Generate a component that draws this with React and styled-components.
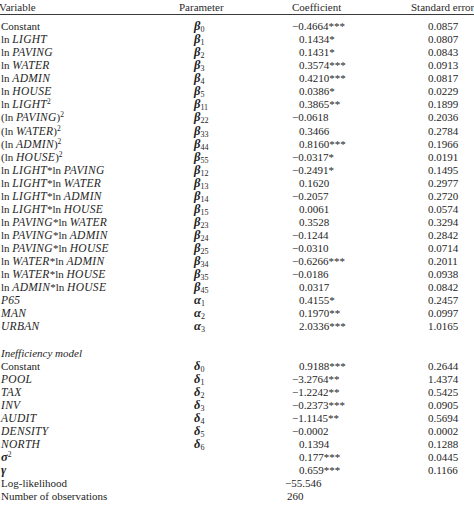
import React from 'react';
import styled, { createGlobalStyle } from 'styled-components';

const GlobalStyle = createGlobalStyle`
  html, body {
    margin: 0;
    padding: 0;
    background: #ffffff;
  }
  body {
    font-family: "Liberation Serif", "Times New Roman", serif;
    font-size: 11px;
    color: #1e1e1e;
  }
`;

const Table = styled.div`
  width: 474px;
  overflow: hidden;
`;

const Row = styled.div`
  display: grid;
  grid-template-columns: 179px 106px 126px 1fr;
  align-items: center;
  height: 13.07px;
  line-height: 13px;
  white-space: nowrap;
`;

const HeadRow = styled(Row)`
  height: 14px;
  border-bottom: 1px solid #3a3a3a;
  margin-bottom: 5px;
`;

const Head = styled.div`
  padding-left: ${(p) => p.$indent || 0}px;
  margin-left: ${(p) => p.$shift || 0}px;
  color: #2a2a2a;
`;

const Cell = styled.div`
  padding-left: ${(p) => p.$indent || 0}px;
`;

const Sym = styled.span`
  font-style: italic;
  font-weight: 700;
  font-size: 12.5px;
`;

const Sub = styled.sub`
  font-size: 8px;
  vertical-align: -2px;
  line-height: 0;
`;

const Sup = styled.sup`
  font-size: 7.5px;
  vertical-align: 4px;
  line-height: 0;
`;

const It = styled.i`
  font-style: italic;
  font-size: 11.5px;
  letter-spacing: 0.3px;
`;

const Section = styled.div`
  font-style: italic;
  font-size: 11px;
  padding-left: 1px;
`;

const Spacer = styled.div`
  height: 13.07px;
`;

const ln = (a, b) => (
  <>
    ln <It>{a}</It>
    {b && (
      <>
        *ln <It>{b}</It>
      </>
    )}
  </>
);

const sq = (a) => (
  <>
    (ln <It>{a}</It>)<Sup>2</Sup>
  </>
);

const b = (n) => ['β', n];
const a = (n) => ['α', n];
const d = (n) => ['δ', n];

const mainRows = [
  ['Constant', b('0'), '−0.4664***', '0.0857'],
  [ln('LIGHT'), b('1'), '0.1434*', '0.0807'],
  [ln('PAVING'), b('2'), '0.1431*', '0.0843'],
  [ln('WATER'), b('3'), '0.3574***', '0.0913'],
  [ln('ADMIN'), b('4'), '0.4210***', '0.0817'],
  [ln('HOUSE'), b('5'), '0.0386*', '0.0229'],
  [<>ln <It>LIGHT</It><Sup>2</Sup></>, b('11'), '0.3865**', '0.1899'],
  [sq('PAVING'), b('22'), '−0.0618', '0.2036'],
  [sq('WATER'), b('33'), '0.3466', '0.2784'],
  [sq('ADMIN'), b('44'), '0.8160***', '0.1966'],
  [sq('HOUSE'), b('55'), '−0.0317*', '0.0191'],
  [ln('LIGHT', 'PAVING'), b('12'), '−0.2491*', '0.1495'],
  [ln('LIGHT', 'WATER'), b('13'), '0.1620', '0.2977'],
  [ln('LIGHT', 'ADMIN'), b('14'), '−0.2057', '0.2720'],
  [ln('LIGHT', 'HOUSE'), b('15'), '0.0061', '0.0574'],
  [ln('PAVING', 'WATER'), b('23'), '0.3528', '0.3294'],
  [ln('PAVING', 'ADMIN'), b('24'), '−0.1244', '0.2842'],
  [ln('PAVING', 'HOUSE'), b('25'), '−0.0310', '0.0714'],
  [ln('WATER', 'ADMIN'), b('34'), '−0.6266***', '0.2011'],
  [ln('WATER', 'HOUSE'), b('35'), '−0.0186', '0.0938'],
  [ln('ADMIN', 'HOUSE'), b('45'), '0.0317', '0.0842'],
  [<It>P65</It>, a('1'), '0.4155*', '0.2457'],
  [<It>MAN</It>, a('2'), '0.1970**', '0.0997'],
  [<It>URBAN</It>, a('3'), '2.0336***', '1.0165'],
];

const ineffRows = [
  ['Constant', d('0'), '0.9188***', '0.2644'],
  [<It>POOL</It>, d('1'), '−3.2764**', '1.4374'],
  [<It>TAX</It>, d('2'), '−1.2242**', '0.5425'],
  [<It>INV</It>, d('3'), '−0.2373***', '0.0905'],
  [<It>AUDIT</It>, d('4'), '−1.1145**', '0.5694'],
  [<It>DENSITY</It>, d('5'), '−0.0002', '0.0002'],
  [<It>NORTH</It>, d('6'), '0.1394', '0.1288'],
  [<><Sym>σ</Sym><Sup>2</Sup></>, null, '0.177***', '0.0445'],
  [<Sym>γ</Sym>, null, '0.659***', '0.1166'],
];

const DataRow = ({ row }) => {
  const [variable, param, coef, se] = row;
  const neg = coef.startsWith('−');
  return (
    <Row>
      <Cell $indent={1}>{variable}</Cell>
      <Cell $indent={15}>
        {param && (
          <>
            <Sym>{param[0]}</Sym>
            <Sub>{param[1]}</Sub>
          </>
        )}
      </Cell>
      <Cell $indent={neg ? 7 : 14}>{coef}</Cell>
      <Cell $indent={17}>{se}</Cell>
    </Row>
  );
};

const App = () => {
  return (
    <>
      <GlobalStyle />
      <Table>
        <HeadRow>
          <Head $shift={-1}>Variable</Head>
          <Head>Parameter</Head>
          <Head $indent={7}>Coefficient</Head>
          <Head>Standard errors</Head>
        </HeadRow>
        {mainRows.map((r, i) => (
          <DataRow key={i} row={r} />
        ))}
        <Spacer />
        <Row>
          <Section>Inefficiency model</Section>
        </Row>
        {ineffRows.map((r, i) => (
          <DataRow key={i} row={r} />
        ))}
        <Row>
          <Cell $indent={1}>Log-likelihood</Cell>
          <Cell />
          <Cell>−55.546</Cell>
        </Row>
        <Row>
          <Cell $indent={1}>Number of observations</Cell>
          <Cell />
          <Cell $indent={2}>260</Cell>
        </Row>
      </Table>
    </>
  );
};

export default App;
